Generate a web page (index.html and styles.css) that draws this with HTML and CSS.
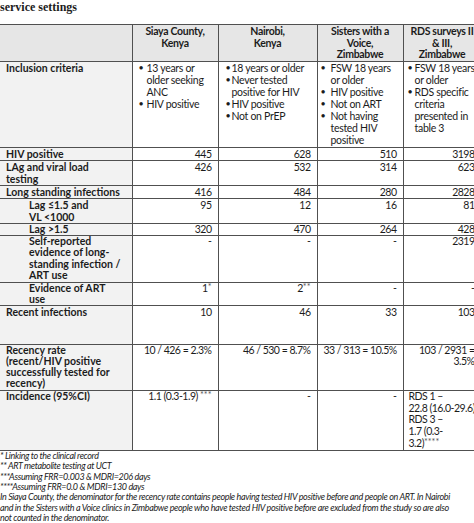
FILE: index.html
```html
<!DOCTYPE html>
<html>
<head>
<meta charset="utf-8">
<link rel="stylesheet" href="styles.css">
</head>
<body>
<div class="page">
  <h1 class="title">service settings</h1>
  <table class="data">
    <colgroup>
      <col class="c1"><col class="c2"><col class="c3"><col class="c4"><col class="c5">
    </colgroup>
    <thead>
      <tr class="r-head">
        <th></th>
        <th>Siaya County,<br>Kenya</th>
        <th>Nairobi,<br>Kenya</th>
        <th>Sisters with a<br>Voice,<br>Zimbabwe</th>
        <th>RDS surveys II<br>&amp; III,<br>Zimbabwe</th>
      </tr>
    </thead>
    <tbody>
      <tr class="r-inc">
        <td class="lab">Inclusion criteria</td>
        <td class="inc">
          <ul class="bl bl-siaya">
            <li><span class="dot">•</span><span>13 years or<br>older seeking<br>ANC</span></li>
            <li><span class="dot">•</span><span>HIV positive</span></li>
          </ul>
        </td>
        <td class="inc">
          <ul class="bl bl-nai">
            <li><span class="dot">•</span><span>18 years or older</span></li>
            <li><span class="dot">•</span><span>Never tested<br>positive for HIV</span></li>
            <li><span class="dot">•</span><span>HIV positive</span></li>
            <li><span class="dot">•</span><span>Not on PrEP</span></li>
          </ul>
        </td>
        <td class="inc">
          <ul class="bl bl-sis">
            <li><span class="dot">•</span><span>FSW 18 years<br>or older</span></li>
            <li><span class="dot">•</span><span>HIV positive</span></li>
            <li><span class="dot">•</span><span>Not on ART</span></li>
            <li><span class="dot">•</span><span>Not having<br>tested HIV<br>positive</span></li>
          </ul>
        </td>
        <td class="inc">
          <ul class="bl bl-rds">
            <li><span class="dot">•</span><span>FSW 18 years<br>or older</span></li>
            <li><span class="dot">•</span><span>RDS specific<br>criteria<br>presented in<br>table 3</span></li>
          </ul>
        </td>
      </tr>
      <tr class="r13">
        <td class="lab">HIV positive</td>
        <td class="num">445</td><td class="num">628</td><td class="num">510</td><td class="num">3198</td>
      </tr>
      <tr class="r25">
        <td class="lab">LAg and viral load<br>testing</td>
        <td class="num">426</td><td class="num">532</td><td class="num">314</td><td class="num">623</td>
      </tr>
      <tr class="r13">
        <td class="lab">Long standing infections</td>
        <td class="num">416</td><td class="num">484</td><td class="num">280</td><td class="num">2828</td>
      </tr>
      <tr class="r25">
        <td class="lab sub">Lag ≤1.5 and<br>VL &lt;1000</td>
        <td class="num">95</td><td class="num">12</td><td class="num">16</td><td class="num">81</td>
      </tr>
      <tr class="r12 lh11">
        <td class="lab sub">Lag &gt;1.5</td>
        <td class="num">320</td><td class="num">470</td><td class="num">264</td><td class="num">428</td>
      </tr>
      <tr class="r47 lh115">
        <td class="lab sub">Self-reported<br>evidence of long-<br>standing infection /<br>ART use</td>
        <td class="num">-</td><td class="num">-</td><td class="num">-</td><td class="num">2319</td>
      </tr>
      <tr class="r23 lh11">
        <td class="lab sub">Evidence of ART<br>use</td>
        <td class="num">1<span class="ast">*</span></td><td class="num">2<span class="ast">**</span></td><td class="num">-</td><td class="num">-</td>
      </tr>
      <tr class="r39">
        <td class="lab">Recent infections</td>
        <td class="num">10</td><td class="num">46</td><td class="num">33</td><td class="num">103</td>
      </tr>
      <tr class="r46 lh1125">
        <td class="lab">Recency rate<br>(recent/HIV positive<br>successfully tested for<br>recency)</td>
        <td class="num">10 / 426 = 2.3%</td>
        <td class="num">46 / 530 = 8.7%</td>
        <td class="num">33 / 313 = 10.5%</td>
        <td class="num">103 / 2931 =<br>3.5%</td>
      </tr>
      <tr class="r60 lh118">
        <td class="lab">Incidence (95%CI)</td>
        <td class="num">1.1 (0.3-1.9) <span class="ast">***</span></td>
        <td class="num">-</td>
        <td class="num">-</td>
        <td class="rds">RDS 1 –<br>22.8 (16.0-29.6)<span class="ast">***</span><br>RDS 3 –<br>1.7 (0.3-<br>3.2)<span class="ast">****</span></td>
      </tr>
    </tbody>
  </table>
  <div class="notes">
    <p>* Linking to the clinical record</p>
    <p>** ART metabolite testing at UCT</p>
    <p>***Assuming FRR=0.003 &amp; MDRI=206 days</p>
    <p>****Assuming FRR=0.0 &amp; MDRI=130 days</p>
    <p>In Siaya County, the denominator for the recency rate contains people having tested HIV positive before and people on ART. In Nairobi</p>
    <p>and in the Sisters with a Voice clinics in Zimbabwe people who have tested HIV positive before are excluded from the study so are also</p>
    <p>not counted in the denominator.</p>
  </div>
</div>
</body>
</html>
```

FILE: styles.css
```css
html, body {
  margin: 0;
  padding: 0;
  overflow: hidden;
  background: #ffffff;
}

.page {
  width: 474px;
  height: 523px;
  overflow: hidden;
  color: #1c1c1c;
}

.title {
  margin: 0;
  height: 24px;
  padding-top: 1px;
  box-sizing: border-box;
  font: bold 12px/12px "Liberation Serif", serif;
  color: #1c1c1c;
}

.data {
  border-collapse: collapse;
  table-layout: fixed;
  width: 481px;
  font: 10.5px/12px Lato, "Noto Sans", sans-serif;
}

.c1 { width: 132px; }
.c2 { width: 86px; }
.c3 { width: 99px; }
.c4 { width: 86px; }
.c5 { width: 78px; }

.data th,
.data td {
  border: 1px solid #505050;
  padding: 0 6px;
  vertical-align: top;
  white-space: nowrap;
  overflow: hidden;
}

.data tr > :first-child {
  border-left: none;
}

.data th {
  background: #e6e6e6;
  font-weight: bold;
  text-align: center;
  line-height: 11.6px;
  padding-top: 1px;
  letter-spacing: -0.3px;
}

.data td.lab {
  background: #f2f2f2;
  font-weight: bold;
  text-align: left;
}

.data td.sub {
  padding-left: 29px;
}

.data td.num {
  text-align: right;
  letter-spacing: -0.5px;
}

.data td.rds {
  padding-left: 5px;
  padding-right: 0;
  letter-spacing: -0.5px;
}

.data td.inc {
  padding: 0;
  letter-spacing: -0.3px;
}

.lh11 td { line-height: 11px; }
.lh115 td { line-height: 11.5px; }
.lh1125 td { line-height: 11.2px; }
.lh118 td { line-height: 11.8px; }

.r-head { height: 36px; }
.r-inc { height: 86px; }
.r12 { height: 12px; }
.r13 { height: 13px; }
.r23 { height: 23px; }
.r25 { height: 25px; }
.r39 { height: 39px; }
.r46 { height: 46px; }
.r47 { height: 47px; }
.r60 { height: 60px; }

.bl {
  list-style: none;
  margin: 0;
  padding: 0;
}

.bl li {
  display: flex;
}

.bl .dot {
  flex: none;
  font-size: 9px;
}

.bl-siaya { padding-left: 6px; }
.bl-siaya .dot { width: 8px; }
.bl-nai { padding-left: 7px; }
.bl-nai .dot { width: 6px; }
.bl-sis { padding-left: 3px; }
.bl-sis .dot { width: 10px; }
.bl-rds { padding-left: 4px; }
.bl-rds .dot { width: 7px; }

.ast {
  font-size: 9px;
  color: #555555;
  vertical-align: 2px;
  line-height: 0;
  letter-spacing: 0;
}

.notes {
  font: italic 9px/10.4px Lato, "Noto Sans", sans-serif;
  letter-spacing: -0.35px;
  color: #1c1c1c;
  white-space: nowrap;
}

.notes p {
  margin: 0;
}
```
